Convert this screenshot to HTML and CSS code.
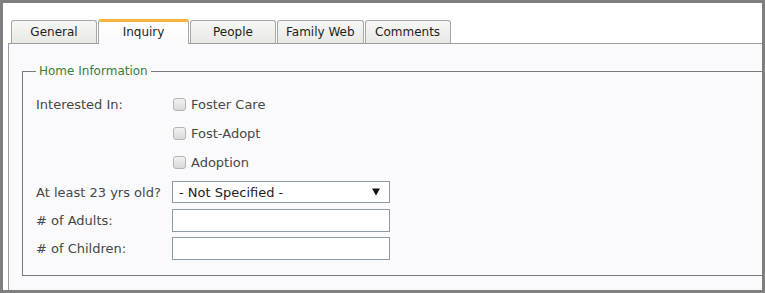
FILE: index.html
```html
<!DOCTYPE html>
<html lang="en">
<head>
    <meta charset="UTF-8">
    <title>Inquiry</title>
    <link rel="stylesheet" href="styles.css">
</head>
<body>

<div class="frame">
    <div class="tabs">
        <div class="tab">General</div>
        <div class="tab active">Inquiry</div>
        <div class="tab">People</div>
        <div class="tab">Family Web</div>
        <div class="tab">Comments</div>
    </div>

    <div class="panel">
        <fieldset class="group">
            <legend>Home Information</legend>

            <div class="row check-row">
                <span class="label">Interested In:</span>
                <label class="check"><input type="checkbox"> Foster Care</label>
            </div>
            <div class="row check-row">
                <span class="label"></span>
                <label class="check"><input type="checkbox"> Fost-Adopt</label>
            </div>
            <div class="row check-row">
                <span class="label"></span>
                <label class="check"><input type="checkbox"> Adoption</label>
            </div>

            <div class="row field-row select-row">
                <span class="label">At least 23 yrs old?</span>
                <div class="select">
                    <span>- Not Specified -</span>
                    <svg class="arrow" width="8" height="8" viewBox="0 0 8 8"><path d="M0 0.5H8L4 7.5Z" fill="#111"/></svg>
                </div>
            </div>
            <div class="row field-row">
                <span class="label"># of Adults:</span>
                <input class="text" type="text">
            </div>
            <div class="row field-row">
                <span class="label"># of Children:</span>
                <input class="text" type="text">
            </div>
        </fieldset>
    </div>
</div>

</body>
</html>
```

FILE: styles.css
```css
body {
    margin: 0;
    padding: 0;
    font-family: "DejaVu Sans", Verdana, sans-serif;
    background-color: #fff;
}
.frame {
    width: 765px;
    height: 293px;
    box-sizing: border-box;
    border: 3px solid #7f7f7f;
    background: #fff;
    overflow: hidden;
}

/* tabs */
.tabs {
    display: flex;
    gap: 1px;
    padding: 16px 0 0 8px;
    align-items: flex-end;
    position: relative;
    z-index: 1;
}
.tab {
    min-width: 68px;
    height: 22px;
    padding: 0 8px;
    box-sizing: content-box;
    border: 1px solid #a6a6a6;
    border-bottom: none;
    border-radius: 3px 3px 0 0;
    background: linear-gradient(#f7f7f5, #e8e8e4);
    color: #1e1e1e;
    font-size: 12px;
    line-height: 22px;
    text-align: center;
}
.tab.active {
    width: 89px;
    min-width: 0;
    padding: 0;
    border-top: 3px solid #f4b63c;
    background: linear-gradient(#fff, #fafafc);
    margin-bottom: -1px;
    height: 22px;
    line-height: 21px;
}

/* panel */
.panel {
    margin: 0 -20px 0 5px;
    border-top: 1px solid #9c9c9c;
    border-left: 1px solid #9c9c9c;
    background: #fafafc;
    height: 260px;
}
.group {
    margin: 20px 0 0 13px;
    padding: 12px 13px 15px 13px;
    border: 1px solid #7a7a7a;
    border-right: none;
}
.group legend {
    padding: 0 3px;
    color: #3a7d3a;
    font-size: 12px;
}

/* rows */
.row {
    display: flex;
    align-items: center;
    font-size: 13px;
    color: #474747;
}
.label {
    width: 136px;
    flex: none;
}
.check-row {
    height: 29px;
}
.check {
    display: flex;
    align-items: center;
    gap: 5px;
    color: #474747;
}
.check input {
    appearance: none;
    margin: 0 0 0 1px;
    width: 13px;
    height: 13px;
    border: 1px solid #b4b4b4;
    border-radius: 3px;
    background: linear-gradient(#f2f2f2, #d9d9d9);
}
.select-row {
    margin-top: 4px;
}
.field-row + .field-row {
    margin-top: 6px;
}
.field-row:last-child {
    margin-top: 5px;
}
.select {
    width: 218px;
    height: 22px;
    box-sizing: border-box;
    border: 1px solid #8a9ca8;
    background: #fff;
    display: flex;
    align-items: center;
    justify-content: space-between;
    padding: 0 9px 0 6px;
    color: #222;
}
.arrow {
    display: block;
}
.text {
    width: 218px;
    height: 23px;
    box-sizing: border-box;
    margin: 0;
    border: 1px solid #8a9ca8;
    background: #fff;
}
```
